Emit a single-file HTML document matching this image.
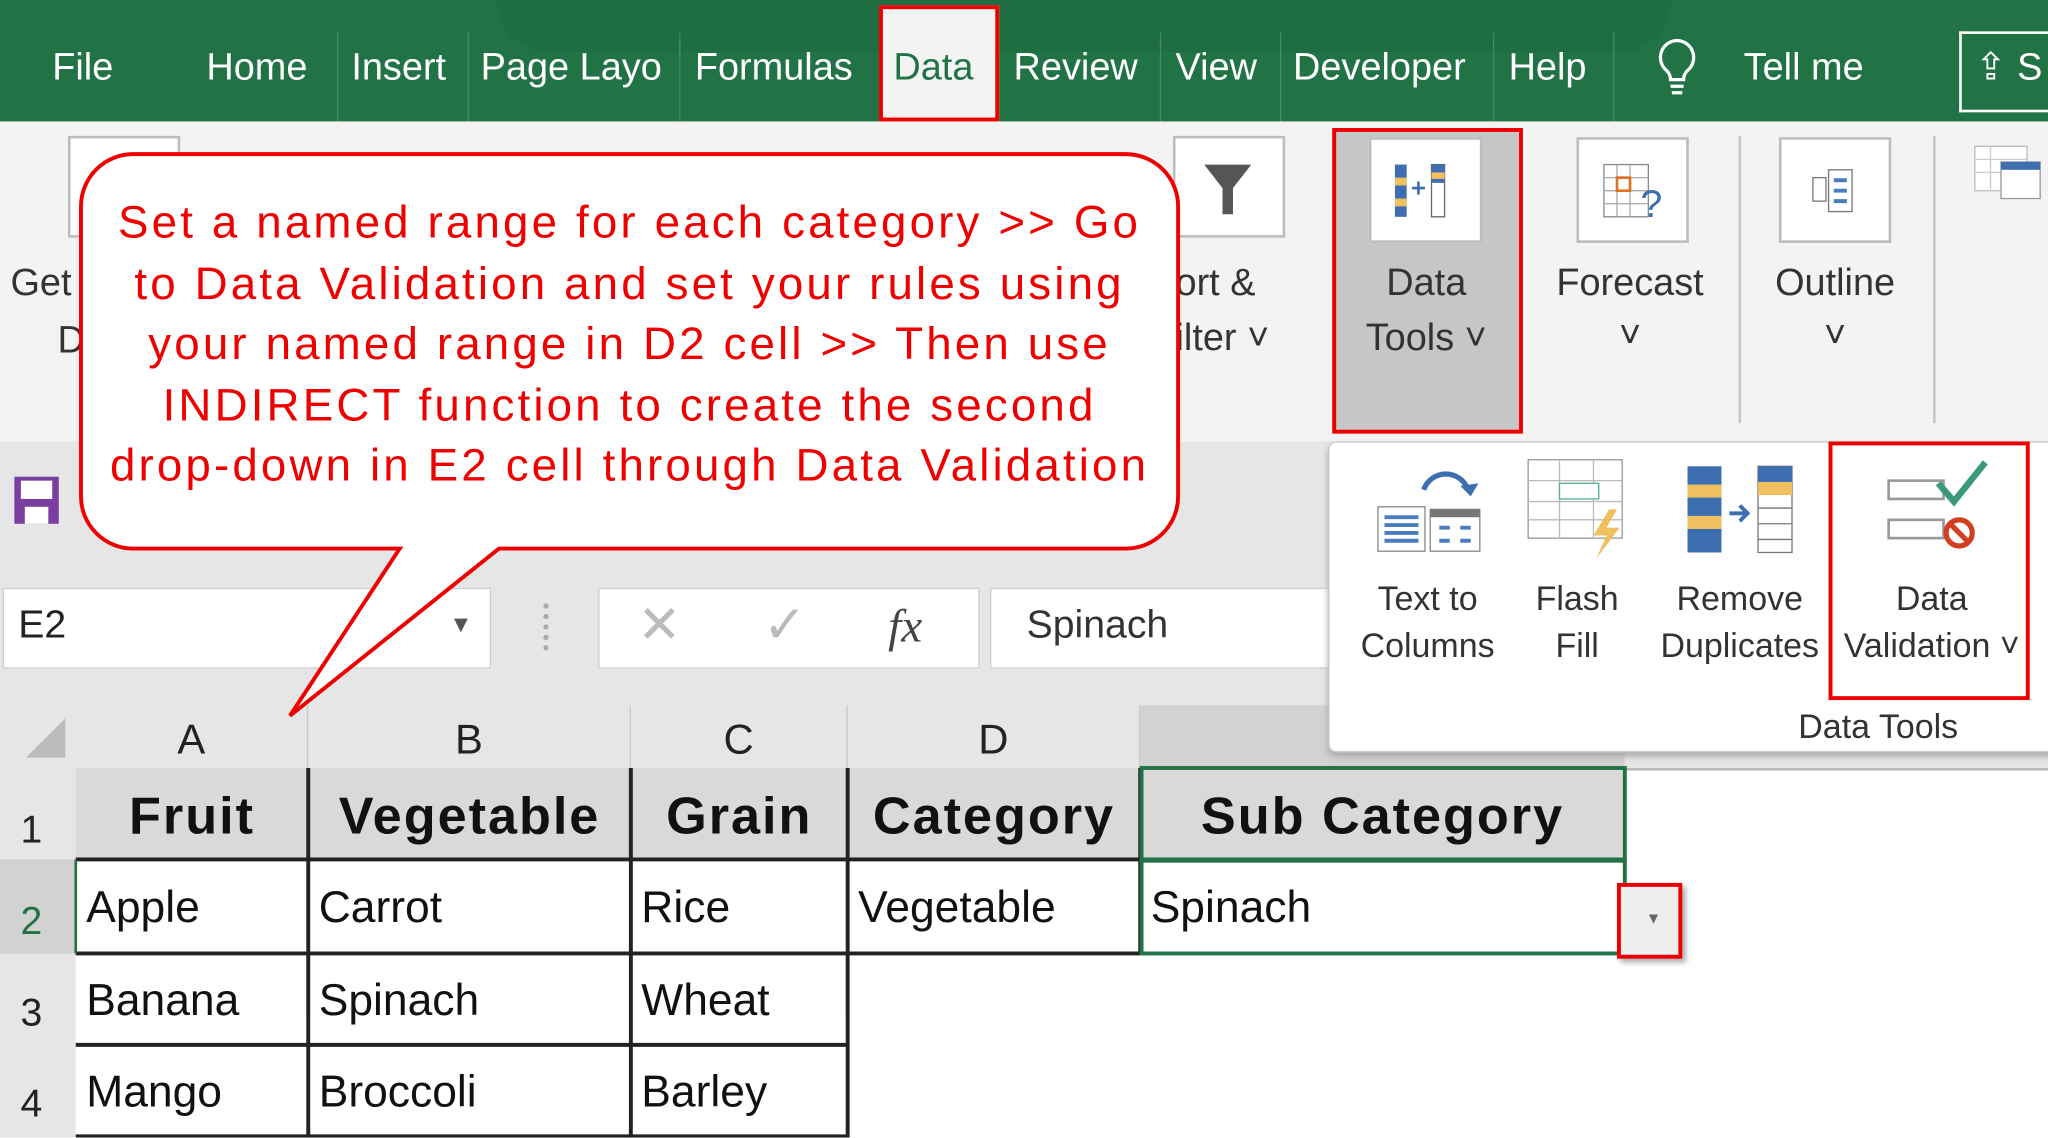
<!DOCTYPE html>
<html><head><meta charset="utf-8">
<style>
html,body{margin:0;padding:0;width:2048px;height:1138px;overflow:hidden;background:#fff}
#w{position:absolute;left:0;top:0;width:1568px;height:871px;transform:scale(1.30612);transform-origin:0 0;font-family:"Liberation Sans",sans-serif;overflow:hidden;background:#fff}
.a{position:absolute}
.tab{position:absolute;top:30px;color:#fff;font-size:29px;line-height:44px}
.sep{position:absolute;top:25px;width:1px;height:75px;background:#4a8a63}
.rb{position:absolute;background:#fff;border:2px solid #bdbdbd}
.lbl{position:absolute;color:#333;font-size:29px;text-align:center;line-height:43px}
.cell{position:absolute;font-size:34px;color:#111;line-height:70px;padding-left:8px}
.hd{position:absolute;font-size:40px;font-weight:bold;color:#111;text-align:center;line-height:70px;letter-spacing:1.5px}
.ch{position:absolute;top:540px;height:48px;font-size:32px;color:#222;text-align:center;line-height:52px;border-right:1px solid #c8c8c8}
.rn{position:absolute;left:0;width:48px;font-size:30px;color:#222;text-align:center;line-height:80px}
.dl{position:absolute;color:#333;font-size:26px;text-align:center;line-height:36px}
</style></head><body><div id="w">
<div class="a" style="left:0;top:0;width:1568px;height:93px;background:#217346"></div>
<div class="a" style="left:380px;top:0;width:900px;height:40px;background:#1d6a3f;border-radius:0 0 200px 200px;opacity:.6"></div>
<div class="tab" style="left:40px">File</div>
<div class="tab" style="left:158px">Home</div><div class="sep" style="left:258px"></div>
<div class="tab" style="left:269px">Insert</div><div class="sep" style="left:358px"></div>
<div class="tab" style="left:368px">Page Layo</div><div class="sep" style="left:520px"></div>
<div class="tab" style="left:532px">Formulas</div>
<div class="a" style="left:673px;top:4px;width:86px;height:83px;background:#f3f3f3;border:3px solid #e00"></div>
<div class="tab" style="left:684px;color:#217346">Data</div>
<div class="tab" style="left:776px">Review</div><div class="sep" style="left:888px"></div>
<div class="tab" style="left:900px">View</div><div class="sep" style="left:980px"></div>
<div class="tab" style="left:990px">Developer</div><div class="sep" style="left:1143px"></div>
<div class="tab" style="left:1155px">Help</div><div class="sep" style="left:1235px"></div>
<svg class="a" style="left:1266px;top:28px" width="36" height="50" viewBox="0 0 36 50"><path d="M18 3a13 13 0 0 0-8 23c2 2 3 4 3 7h10c0-3 1-5 3-7A13 13 0 0 0 18 3zM13 38h10M14 43h8" fill="none" stroke="#fff" stroke-width="2.5"/></svg>
<div class="tab" style="left:1335px">Tell me</div>
<div class="a" style="left:1500px;top:24px;width:80px;height:58px;border:2px solid #fff;border-right:none"></div>
<div class="tab" style="left:1512px">⇪ S</div>
<div class="a" style="left:0;top:93px;width:1568px;height:245px;background:#f3f3f3;border-bottom:2px solid #ddd"></div>
<div class="rb" style="left:52px;top:104px;width:82px;height:74px"></div>
<div class="lbl" style="left:8px;top:196px">Get</div><div class="lbl" style="left:44px;top:240px">D</div>
<div class="rb" style="left:898px;top:104px;width:82px;height:74px"></div>
<svg class="a" style="left:920px;top:122px" width="40" height="46"><path d="M2 4h36L24 22v20h-8V22z" fill="#555"/></svg>
<div class="lbl" style="left:900px;top:196px">ort &amp;</div><div class="lbl" style="left:900px;top:238px">ilter ˅</div>
<div class="a" style="left:1020px;top:98px;width:140px;height:228px;background:#c6c6c6;border:3px solid #e00"></div>
<div class="rb" style="left:1048px;top:105px;width:83px;height:77px"></div>
<svg class="a" style="left:1066px;top:124px" width="50" height="44"><rect x="2" y="2" width="9" height="40" fill="#3d6eb0"/><rect x="2" y="12" width="9" height="6" fill="#f0c060"/><rect x="2" y="28" width="9" height="6" fill="#f0c060"/><rect x="30" y="2" width="10" height="40" fill="#fff" stroke="#666"/><rect x="30" y="2" width="10" height="14" fill="#3d6eb0"/><rect x="30" y="8" width="10" height="5" fill="#f0c060"/><path d="M15 20h10M20 15v10" stroke="#3d6eb0" stroke-width="2"/></svg>
<div class="lbl" style="left:1022px;top:196px;width:140px">Data</div>
<div class="lbl" style="left:1022px;top:238px;width:140px">Tools ˅</div>
<div class="rb" style="left:1207px;top:105px;width:82px;height:77px"></div>
<svg class="a" style="left:1226px;top:124px" width="50" height="52"><rect x="2" y="2" width="34" height="40" fill="#fff" stroke="#888"/><path d="M2 12h34M2 22h34M2 32h34M12 2v40M22 2v40" stroke="#aaa"/><rect x="12" y="12" width="10" height="10" fill="none" stroke="#e07020" stroke-width="2"/><text x="30" y="42" font-size="30" fill="#3d6eb0" font-family="Liberation Sans">?</text></svg>
<div class="lbl" style="left:1180px;top:196px;width:136px">Forecast</div><div class="lbl" style="left:1180px;top:236px;width:136px">˅</div>
<div class="a" style="left:1331px;top:104px;width:2px;height:220px;background:#c8c8c8"></div>
<div class="rb" style="left:1362px;top:105px;width:82px;height:77px"></div>
<svg class="a" style="left:1384px;top:126px" width="40" height="40"><rect x="4" y="10" width="10" height="18" fill="none" stroke="#777"/><rect x="16" y="4" width="18" height="32" fill="#fff" stroke="#777"/><path d="M20 12h10M20 20h10M20 28h10" stroke="#4a7cc0" stroke-width="3"/></svg>
<div class="lbl" style="left:1340px;top:196px;width:130px">Outline</div><div class="lbl" style="left:1340px;top:236px;width:130px">˅</div>
<div class="a" style="left:1480px;top:104px;width:2px;height:220px;background:#c8c8c8"></div>
<svg class="a" style="left:1510px;top:110px" width="58" height="44"><rect x="2" y="2" width="40" height="34" fill="#fff" stroke="#bbb"/><path d="M2 12h40M2 22h40M14 2v34" stroke="#ccc"/><rect x="22" y="14" width="30" height="28" fill="#fff" stroke="#999"/><rect x="22" y="14" width="30" height="6" fill="#3d6eb0"/></svg>
<div class="a" style="left:0;top:338px;width:1568px;height:202px;background:#e6e6e6"></div>
<svg class="a" style="left:10px;top:364px" width="36" height="38"><rect x="1" y="1" width="34" height="36" fill="#7a3ea0"/><rect x="6" y="4" width="24" height="14" fill="#fff"/><rect x="9" y="24" width="18" height="13" fill="#fff"/></svg>
<div class="a" style="left:2px;top:450px;width:372px;height:60px;background:#fff;border:1px solid #ccc"></div>
<div class="a" style="left:14px;top:462px;font-size:30px;color:#222">E2</div>
<div class="a" style="left:344px;top:468px;font-size:18px;color:#555">▼</div>
<div class="a" style="left:416px;top:462px;width:4px;height:36px;border-left:4px dotted #aaa"></div>
<div class="a" style="left:458px;top:450px;width:290px;height:60px;background:#fff;border:1px solid #ccc"></div>
<div class="a" style="left:488px;top:456px;font-size:40px;color:#bbb">✕</div>
<div class="a" style="left:584px;top:456px;font-size:40px;color:#bbb">✓</div>
<div class="a" style="left:680px;top:458px;font-size:36px;color:#444;font-family:'Liberation Serif',serif;font-style:italic">fx</div>
<div class="a" style="left:758px;top:450px;width:270px;height:60px;background:#fff;border:1px solid #ccc"></div>
<div class="a" style="left:786px;top:462px;font-size:30px;color:#333">Spinach</div>
<div class="a" style="left:0;top:540px;width:1568px;height:48px;background:#e6e6e6;border-bottom:2px solid #bbb"></div>
<svg class="a" style="left:18px;top:548px" width="34" height="34"><path d="M32 2V32H2z" fill="#bbb"/></svg>
<div class="ch" style="left:58px;width:177px">A</div>
<div class="ch" style="left:236px;width:246px">B</div>
<div class="ch" style="left:483px;width:165px">C</div>
<div class="ch" style="left:649px;width:223px">D</div>
<div class="a" style="left:873px;top:540px;width:371px;height:48px;background:#d2d2d2"></div>
<div class="a" style="left:0;top:588px;width:58px;height:283px;background:#e6e6e6"></div>
<div class="a" style="left:0;top:658px;width:58px;height:72px;background:#d2d2d2"></div>
<div class="rn" style="top:596px">1</div><div class="rn" style="top:666px;color:#217346">2</div>
<div class="rn" style="top:736px">3</div><div class="rn" style="top:806px">4</div>
<div class="a" style="left:58px;top:588px;width:1186px;height:70px;background:#d9d9d9"></div>
<div class="hd" style="left:58px;top:590px;width:178px">Fruit</div>
<div class="hd" style="left:236px;top:590px;width:247px">Vegetable</div>
<div class="hd" style="left:483px;top:590px;width:166px">Grain</div>
<div class="hd" style="left:649px;top:590px;width:224px">Category</div>
<div class="hd" style="left:873px;top:590px;width:371px">Sub Category</div>
<svg class="a" style="left:0;top:0" width="1568" height="871">
<g stroke="#222" stroke-width="3">
<path d="M58 658H1244M58 730H873M58 800H649M58 870H649"/>
<path d="M236 588V871M483 588V871M649 588V871M873 588V730"/>
</g>
<path d="M58 658V730" stroke="#217346" stroke-width="2"/>
<rect x="874" y="588" width="370" height="70" fill="none" stroke="#217346" stroke-width="3"/>
<rect x="874" y="659" width="370" height="71" fill="none" stroke="#217346" stroke-width="3"/>
</svg>
<div class="cell" style="left:58px;top:660px">Apple</div>
<div class="cell" style="left:236px;top:660px">Carrot</div>
<div class="cell" style="left:483px;top:660px">Rice</div>
<div class="cell" style="left:649px;top:660px">Vegetable</div>
<div class="cell" style="left:873px;top:660px">Spinach</div>
<div class="cell" style="left:58px;top:731px">Banana</div>
<div class="cell" style="left:236px;top:731px">Spinach</div>
<div class="cell" style="left:483px;top:731px">Wheat</div>
<div class="cell" style="left:58px;top:801px">Mango</div>
<div class="cell" style="left:236px;top:801px">Broccoli</div>
<div class="cell" style="left:483px;top:801px">Barley</div>
<div class="a" style="left:1238px;top:676px;width:44px;height:52px;background:#eee;border:3px solid #e00;box-shadow:3px 3px 4px #aaa"></div>
<div class="a" style="left:1260px;top:696px;font-size:12px;color:#666">▼</div>
<div class="a" style="left:1017px;top:338px;width:560px;height:236px;background:#fff;border:1px solid #ccc;border-radius:6px;box-shadow:0 3px 5px #aaa"></div>
<svg class="a" style="left:1050px;top:350px" width="90" height="75"><path d="M40 25a18 18 0 0 1 34 0" fill="none" stroke="#3d6eb0" stroke-width="4"/><path d="M68 22l8 8 6-10z" fill="#3d6eb0"/><rect x="5" y="38" width="36" height="34" fill="#fff" stroke="#888"/><path d="M10 46h26M10 52h26M10 58h26M10 64h26" stroke="#4a7cc0" stroke-width="3"/><rect x="45" y="40" width="38" height="32" fill="#fff" stroke="#888"/><rect x="45" y="40" width="38" height="6" fill="#777"/><path d="M52 54h8M68 54h8M52 64h8M68 64h8" stroke="#4a7cc0" stroke-width="3"/></svg>
<svg class="a" style="left:1168px;top:350px" width="80" height="80"><rect x="2" y="2" width="72" height="60" fill="#fff" stroke="#999"/><path d="M2 18h72M2 34h72M2 48h72M26 2v60M52 2v60" stroke="#bbb"/><rect x="26" y="20" width="30" height="12" fill="#fff" stroke="#5a9"/><path d="M64 40l-12 20h10l-8 18 18-24h-10l8-14z" fill="#f0c060"/></svg>
<svg class="a" style="left:1290px;top:355px" width="86" height="70"><rect x="2" y="2" width="26" height="66" fill="#3d6eb0"/><rect x="2" y="16" width="26" height="10" fill="#f0c060"/><rect x="2" y="40" width="26" height="10" fill="#f0c060"/><rect x="56" y="2" width="26" height="66" fill="#fff" stroke="#777"/><rect x="56" y="2" width="26" height="12" fill="#3d6eb0"/><rect x="56" y="14" width="26" height="10" fill="#f0c060"/><path d="M56 34h26M56 46h26M56 58h26" stroke="#777"/><path d="M34 38h14M42 32l6 6-6 6" stroke="#3d6eb0" stroke-width="3" fill="none"/></svg>
<div class="a" style="left:1400px;top:338px;width:148px;height:192px;border:3px solid #e00"></div>
<svg class="a" style="left:1440px;top:352px" width="84" height="72"><rect x="6" y="16" width="42" height="14" fill="#fff" stroke="#999" stroke-width="2"/><rect x="6" y="46" width="42" height="14" fill="#fff" stroke="#999" stroke-width="2"/><path d="M44 18l12 14 24-30" stroke="#3a9a7a" stroke-width="5" fill="none"/><circle cx="60" cy="56" r="10" fill="none" stroke="#d04020" stroke-width="4"/><path d="M53 49l14 14" stroke="#d04020" stroke-width="4"/></svg>
<div class="dl" style="left:1030px;top:440px;width:126px">Text to<br>Columns</div>
<div class="dl" style="left:1160px;top:440px;width:95px">Flash<br>Fill</div>
<div class="dl" style="left:1262px;top:440px;width:140px">Remove<br>Duplicates</div>
<div class="dl" style="left:1404px;top:440px;width:150px">Data<br>Validation ˅</div>
<div class="dl" style="left:1360px;top:538px;width:156px">Data Tools</div>
<svg class="a" style="left:0;top:0" width="1568" height="871">
<path d="M102 118H862a40 40 0 0 1 40 40V380a40 40 0 0 1-40 40H382L222 548 306 420H102a40 40 0 0 1-40-40V158a40 40 0 0 1 40-40z" fill="#fff" stroke="#e00" stroke-width="3"/>
</svg>
<div class="a" style="left:62px;top:148px;width:840px;text-align:center;color:#e00;font-size:35px;line-height:46.5px;letter-spacing:2.4px">Set a named range for each category &gt;&gt; Go<br>to Data Validation and set your rules using<br>your named range in D2 cell &gt;&gt; Then use<br>INDIRECT function to create the second<br>drop-down in E2 cell through Data Validation</div>
</div></body></html>
